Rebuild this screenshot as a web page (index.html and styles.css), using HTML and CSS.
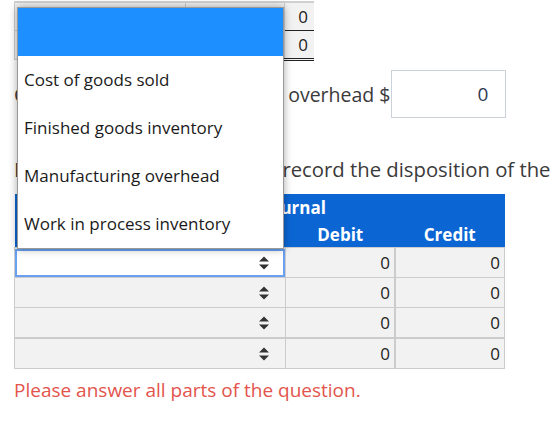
FILE: index.html
```html
<!DOCTYPE html>
<html lang="en">
<head>
    <meta charset="UTF-8">
    <title>Journal entry</title>
    <link rel="stylesheet" href="styles.css">
</head>
<body>
    <div class="page">
        <!-- ringkasan di atas -->
        <table class="summary">
            <tr>
                <td class="s-name"></td>
                <td class="s-mid"></td>
                <td class="s-val total">0</td>
            </tr>
            <tr>
                <td class="s-name"></td>
                <td class="s-mid"></td>
                <td class="s-val final">0</td>
            </tr>
        </table>

        <div class="answer-line">
            <span class="question">Calculate the total misapplied overhead $</span>
            <div class="amount">0</div>
        </div>

        <p class="question prompt">Prepare the journal entry to record the disposition of the underapplied overhead.</p>

        <table class="journal">
            <thead>
                <tr><th colspan="3" class="title">General Journal</th></tr>
                <tr>
                    <th></th>
                    <th class="num-head">Debit</th>
                    <th class="num-head">Credit</th>
                </tr>
            </thead>
            <tbody>
                <tr>
                    <td class="acct"><div class="select focused"><svg width="10" height="14" viewBox="0 0 10 14"><path d="M0 5.5 5 0.5 10 5.5Z M0 8.5 5 13.5 10 8.5Z" fill="#333"/></svg></div></td>
                    <td class="num">0</td>
                    <td class="num">0</td>
                </tr>
                <tr>
                    <td class="acct"><div class="select"><svg width="10" height="14" viewBox="0 0 10 14"><path d="M0 5.5 5 0.5 10 5.5Z M0 8.5 5 13.5 10 8.5Z" fill="#333"/></svg></div></td>
                    <td class="num">0</td>
                    <td class="num">0</td>
                </tr>
                <tr>
                    <td class="acct"><div class="select"><svg width="10" height="14" viewBox="0 0 10 14"><path d="M0 5.5 5 0.5 10 5.5Z M0 8.5 5 13.5 10 8.5Z" fill="#333"/></svg></div></td>
                    <td class="num">0</td>
                    <td class="num">0</td>
                </tr>
                <tr class="last">
                    <td class="acct"><div class="select"><svg width="10" height="14" viewBox="0 0 10 14"><path d="M0 5.5 5 0.5 10 5.5Z M0 8.5 5 13.5 10 8.5Z" fill="#333"/></svg></div></td>
                    <td class="num">0</td>
                    <td class="num">0</td>
                </tr>
            </tbody>
        </table>

        <p class="error">Please answer all parts of the question.</p>

        <!-- daftar pilihan yang sedang terbuka -->
        <ul class="dropdown">
            <li class="active"></li>
            <li>Cost of goods sold</li>
            <li>Finished goods inventory</li>
            <li>Manufacturing overhead</li>
            <li>Work in process inventory</li>
        </ul>
    </div>
</body>
</html>
```

FILE: styles.css
```css
html, body {
    margin: 0;
    padding: 0;
    overflow: hidden;
}
body {
    font-family: 'Open Sans', 'Noto Sans', sans-serif;
    color: #333;
    background: #fff;
}
.page {
    position: relative;
    padding: 1px 14px 0;
    width: 522px;
    height: 438px;
    overflow: hidden;
}
.summary {
    border-collapse: collapse;
    border-top: 2px solid #d0d0d0;
    font-size: 17px;
}
.summary td {
    height: 27px;
    padding: 0;
    background: #f2f2f2;
    border-left: 1px solid #ccc;
    border-bottom: 1px solid #ccc;
}
.s-name { width: 170px; }
.s-mid { width: 98px; }
.s-val {
    width: 23px;
    text-align: right;
    padding-right: 6px !important;
    color: #222;
}
.summary .total { border-bottom: 1px solid #222; }
.summary .final { border-bottom: 3px double #222; }
.answer-line {
    display: flex;
    align-items: center;
    margin-top: 9px;
    white-space: nowrap;
}
.question {
    font-size: 19.5px;
    color: #3a3a3a;
}
.amount {
    flex: none;
    width: 96px;
    height: 46px;
    border: 1px solid #cdd1d9;
    margin-left: 1px;
    font-size: 19px;
    line-height: 46px;
    text-align: right;
    padding-right: 17px;
    color: #2f3b52;
}
.prompt {
    font-size: 20.3px;
    margin: 38px 0 12px;
    white-space: nowrap;
    line-height: 26px;
}
.journal {
    border-collapse: collapse;
    width: 491px;
    font-size: 17px;
}
.journal thead th {
    background: #0b66d4;
    color: #fff;
    font-weight: bold;
    font-size: 17px;
    padding: 0;
}
.journal .title {
    height: 27px;
    text-align: center;
}
.journal .num-head {
    height: 26px;
    text-align: center;
}
.journal td {
    background: #f2f2f2;
    border: 1px solid #ccc;
    height: 29px;
    padding: 0;
}
.journal td.acct { width: 270px; }
.journal td.num {
    width: 104px;
    text-align: right;
    padding-right: 4px;
    color: #222;
}
.journal td.num:last-child {
    border-left: 2px solid #ccc;
}
.journal tr.last td { border-top: 2px solid #ccc; }
.select {
    height: 29px;
    display: flex;
    align-items: center;
    justify-content: flex-end;
    padding-right: 16px;
    box-sizing: border-box;
}
.select.focused {
    background: #fff;
    border: 2px solid #69a0f2;
    height: 28px;
    padding-right: 14px;
}
.error {
    margin: 8px 0 0;
    font-size: 19px;
    color: #e3544c;
}
.dropdown {
    position: absolute;
    top: 7px;
    left: 17px;
    width: 265px;
    margin: 0;
    padding: 0;
    list-style: none;
    background: #fff;
    border: 1px solid #999;
    box-shadow: 0 0 8px rgba(0, 0, 0, 0.35);
    font-size: 17px;
    color: #1a1a1a;
}
.dropdown li {
    height: 48px;
    line-height: 48px;
    padding-left: 6px;
}
.dropdown li.active {
    background: #1e8fff;
}
```
